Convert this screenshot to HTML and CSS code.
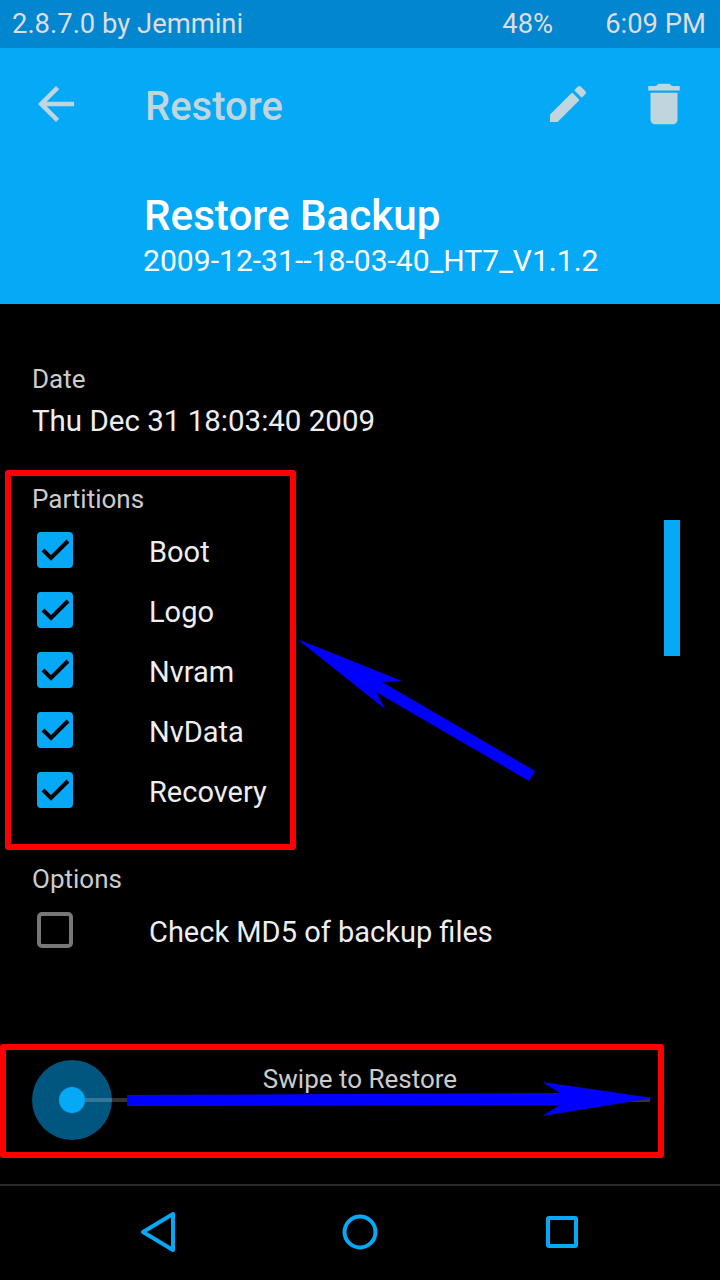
FILE: index.html
```html
<!DOCTYPE html>
<html lang="en">
<head>
    <meta charset="UTF-8">
    <meta name="viewport" content="width=device-width, initial-scale=1.0">
    <title>Restore Backup</title>
    <link rel="stylesheet" href="styles.css">
</head>
<body>
    <div class="status-bar">
        <span class="status-version">2.8.7.0 by Jemmini</span>
        <span class="status-battery">48%</span>
        <span class="status-time">6:09 PM</span>
    </div>

    <header class="header">
        <div class="toolbar">
            <svg class="icon-back" viewBox="0 0 24 24"><path d="M20 11H7.83l5.59-5.59L12 4l-8 8 8 8 1.41-1.41L7.83 13H20v-2z"/></svg>
            <div class="toolbar-title">Restore</div>
            <svg class="icon-edit" viewBox="0 0 24 24"><path d="M3 17.25V21h3.75L17.81 9.94l-3.75-3.75L3 17.25zM20.71 7.04c.39-.39.39-1.02 0-1.41l-2.34-2.34c-.39-.39-1.02-.39-1.41 0l-1.83 1.83 3.75 3.75 1.83-1.83z"/></svg>
            <svg class="icon-delete" viewBox="0 0 24 24"><path d="M6 19c0 1.1.9 2 2 2h8c1.1 0 2-.9 2-2V7H6v12zM19 4h-3.5l-1-1h-5l-1 1H5v2h14V4z"/></svg>
        </div>
        <h1 class="title">Restore Backup</h1>
        <div class="subtitle">2009-12-31--18-03-40_HT7_V1.1.2</div>
    </header>

    <main class="content">
        <div class="label label-date">Date</div>
        <div class="value">Thu Dec 31 18:03:40 2009</div>

        <div class="label label-partitions">Partitions</div>
        <div class="row">
            <svg class="check" viewBox="0 0 36 36"><rect width="36" height="36" rx="4" class="check-box"/><path d="M6 18l8 8L31 9" class="check-mark"/></svg>
            <span>Boot</span>
        </div>
        <div class="row">
            <svg class="check" viewBox="0 0 36 36"><rect width="36" height="36" rx="4" class="check-box"/><path d="M6 18l8 8L31 9" class="check-mark"/></svg>
            <span>Logo</span>
        </div>
        <div class="row">
            <svg class="check" viewBox="0 0 36 36"><rect width="36" height="36" rx="4" class="check-box"/><path d="M6 18l8 8L31 9" class="check-mark"/></svg>
            <span>Nvram</span>
        </div>
        <div class="row">
            <svg class="check" viewBox="0 0 36 36"><rect width="36" height="36" rx="4" class="check-box"/><path d="M6 18l8 8L31 9" class="check-mark"/></svg>
            <span>NvData</span>
        </div>
        <div class="row">
            <svg class="check" viewBox="0 0 36 36"><rect width="36" height="36" rx="4" class="check-box"/><path d="M6 18l8 8L31 9" class="check-mark"/></svg>
            <span>Recovery</span>
        </div>

        <div class="label label-options">Options</div>
        <div class="row">
            <svg class="check" viewBox="0 0 36 36"><rect x="2" y="2" width="32" height="32" rx="3" class="check-empty"/></svg>
            <span>Check MD5 of backup files</span>
        </div>

        <div class="swipe">
            <div class="swipe-label">Swipe to Restore</div>
            <div class="swipe-track">
                <div class="swipe-knob"><div class="swipe-dot"></div></div>
                <div class="swipe-line"></div>
            </div>
        </div>
    </main>

    <nav class="nav-bar">
        <svg class="nav-icon" viewBox="0 0 48 48"><path d="M9 24L39 6v36z"/></svg>
        <svg class="nav-icon" viewBox="0 0 48 48"><circle cx="24" cy="24" r="15.5"/></svg>
        <svg class="nav-icon" viewBox="0 0 48 48"><rect x="10" y="10" width="28" height="28" rx="1"/></svg>
    </nav>

    <div class="scrollbar"></div>

    <!-- hand drawn markup on top of the screenshot -->
    <svg class="markup" viewBox="0 0 720 1280">
        <rect x="8" y="473" width="285" height="374" class="markup-box"/>
        <rect x="3" y="1047" width="658" height="108" class="markup-box"/>
        <polygon points="297,639 402,681 382,682 535,771 529,781 376,692 385,709" class="markup-arrow"/>
        <polygon points="127,1095 560,1093 542,1082 653,1098 542,1116 560,1105 127,1106" class="markup-arrow"/>
    </svg>
</body>
</html>
```

FILE: styles.css
```css
* {
    box-sizing: border-box;
}
body {
    position: relative;
    display: flex;
    flex-direction: column;
    width: 720px;
    height: 1280px;
    margin: 0;
    overflow: hidden;
    background-color: #000;
    color: #eee;
    font-family: Roboto, "Noto Sans", sans-serif;
}
.status-bar {
    display: flex;
    align-items: center;
    height: 48px;
    padding: 0 14px 0 12px;
    background-color: #0386d0;
    color: #ddd;
    font-size: 27.4px;
}
.status-version {
    flex: 1;
}
.status-time {
    margin-left: 52px;
}
.header {
    height: 256px;
    padding-top: 24px;
    background-color: #05a9f6;
}
.toolbar {
    display: flex;
    align-items: center;
    height: 64px;
    padding-left: 29px;
    fill: #c0d5de;
}
.toolbar-title {
    flex: 1;
    margin-top: 4px;
    margin-left: 62px;
    color: #c0d5de;
    font-size: 40px;
    font-weight: 500;
}
.icon-back {
    width: 54px;
    height: 54px;
}
.icon-edit {
    width: 48px;
    height: 48px;
}
.icon-delete {
    width: 54px;
    height: 54px;
    margin: 0 29px 0 45px;
}
.title {
    margin: 56px 0 0 144px;
    color: #fff;
    font-size: 42.2px;
    font-weight: 500;
    line-height: 48px;
}
.subtitle {
    margin: 1px 0 0 143px;
    color: #fff;
    font-size: 30.1px;
    line-height: 40px;
}
.content {
    flex: 1;
    padding: 0 0 0 32px;
}
.label {
    color: #ccc;
    font-size: 26px;
    line-height: 40px;
}
.label-date {
    margin-top: 55px;
}
.label-partitions {
    margin-top: 38px;
    margin-bottom: 1px;
}
.label-options {
    margin-top: 39px;
    margin-bottom: 1px;
}
.value {
    margin-top: 2px;
    font-size: 29.5px;
    line-height: 40px;
}
.row {
    display: flex;
    align-items: center;
    height: 60px;
    font-size: 29px;
}
.row span {
    margin-top: 4px;
    margin-left: 76px;
}
.check {
    flex: none;
    width: 36px;
    height: 36px;
    margin-left: 5px;
}
.check-box {
    fill: #05a9f6;
}
.check-mark {
    fill: none;
    stroke: #000;
    stroke-width: 4;
}
.check-empty {
    fill: none;
    stroke: #777;
    stroke-width: 4;
}
.swipe {
    display: grid;
    height: 80px;
    margin-top: 100px;
}
.swipe-label,
.swipe-track {
    grid-area: 1 / 1;
}
.swipe-label {
    justify-self: center;
    margin-left: -1px;
    padding-right: 31px;
    color: #ccc;
    font-size: 26px;
    line-height: 38px;
}
.swipe-track {
    display: flex;
    align-items: center;
}
.swipe-knob {
    display: flex;
    align-items: center;
    justify-content: center;
    width: 80px;
    height: 80px;
    border-radius: 50%;
    background-color: #01567f;
}
.swipe-dot {
    width: 26px;
    height: 26px;
    border-radius: 50%;
    background-color: #05a9f6;
}
.swipe-line {
    width: 565px;
    height: 4px;
    margin-left: -27px;
    background-color: rgba(255, 255, 255, 0.2);
}
.nav-bar {
    display: flex;
    align-items: center;
    justify-content: center;
    gap: 154px;
    height: 96px;
    padding-bottom: 2px;
    border-top: 2px solid #2a2a2a;
}
.nav-icon {
    width: 48px;
    height: 48px;
    fill: none;
    stroke: #05a9f6;
    stroke-width: 4;
    stroke-linejoin: round;
}
.scrollbar {
    position: absolute;
    top: 520px;
    left: 664px;
    width: 16px;
    height: 136px;
    background-color: #05a9f6;
}
.markup {
    position: absolute;
    top: 0;
    left: 0;
    width: 720px;
    height: 1280px;
}
.markup-box {
    fill: none;
    stroke: #f00;
    stroke-width: 6;
    stroke-linejoin: round;
}
.markup-arrow {
    fill: #00f;
}
```
